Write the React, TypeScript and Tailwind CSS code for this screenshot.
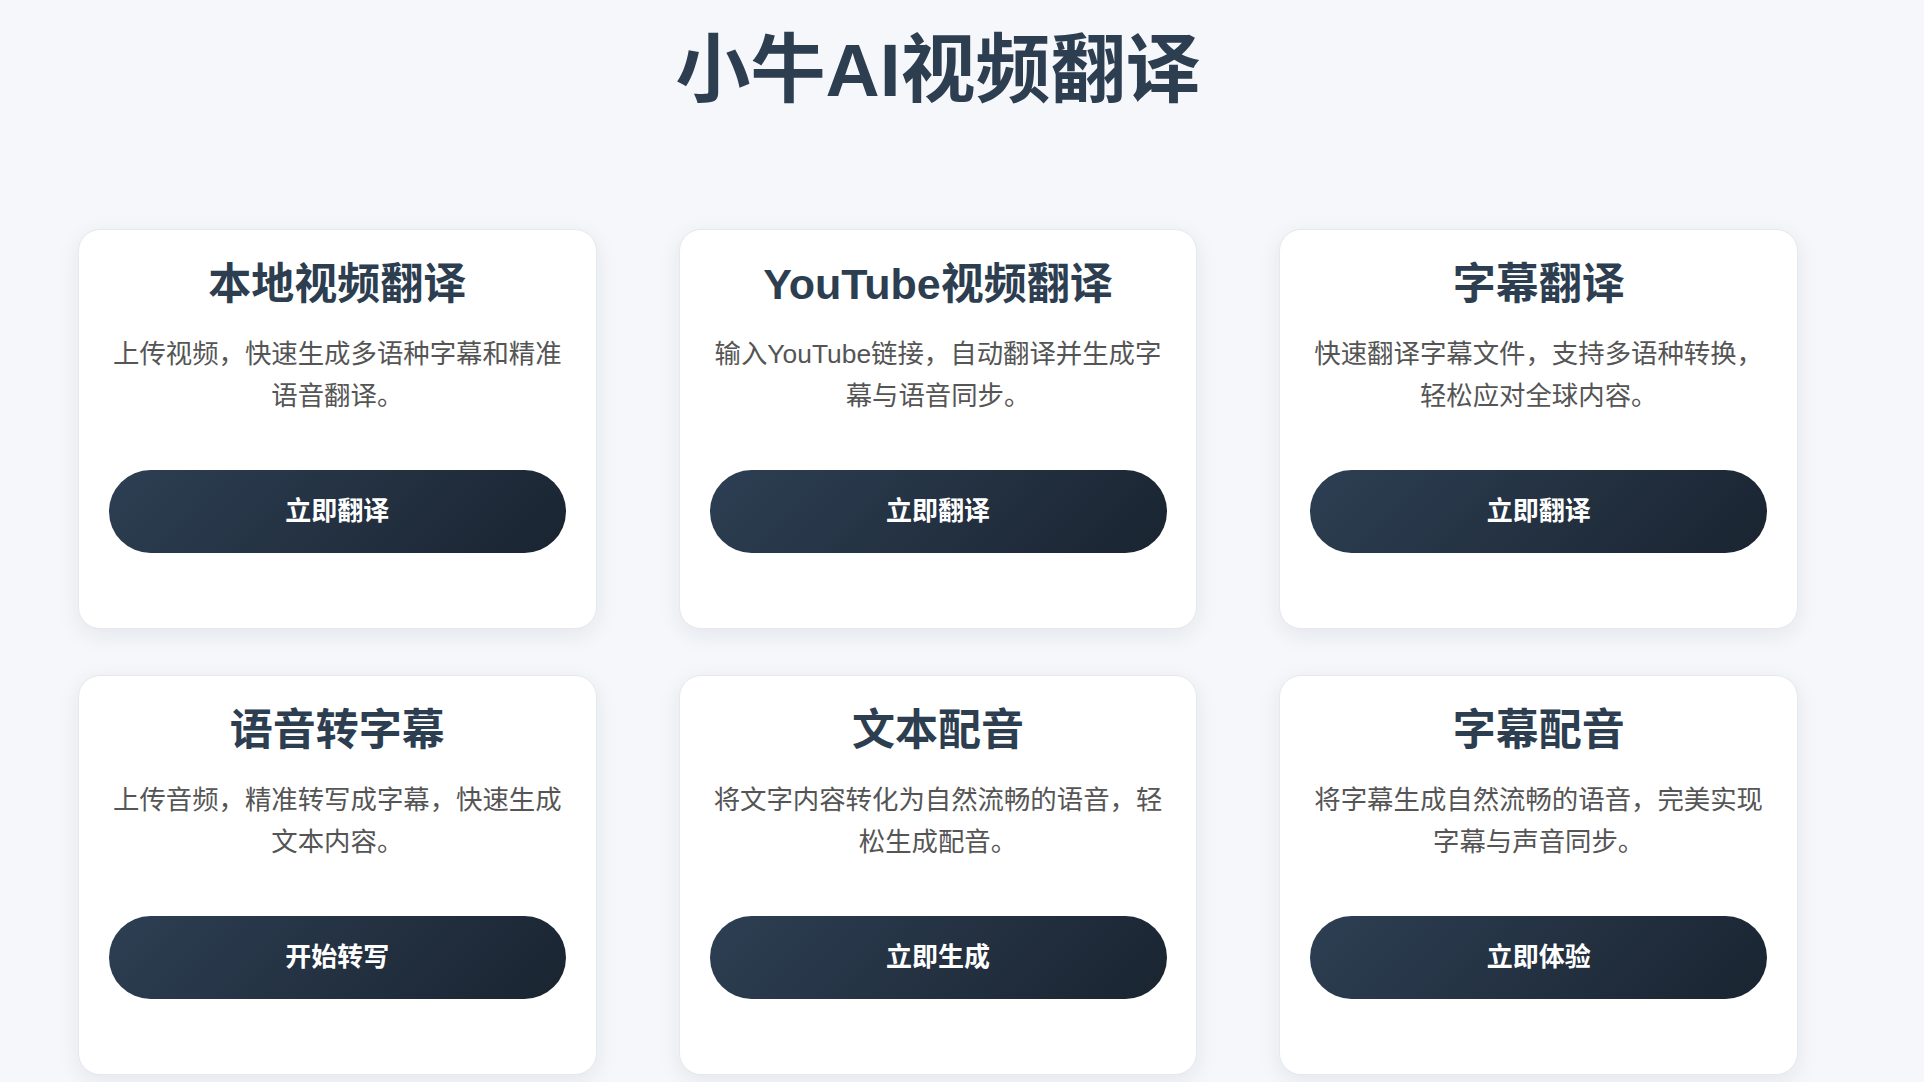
const cards = [
  {
    title: "本地视频翻译",
    desc: "上传视频，快速生成多语种字幕和精准语音翻译。",
    action: "立即翻译",
  },
  {
    title: "YouTube视频翻译",
    desc: "输入YouTube链接，自动翻译并生成字幕与语音同步。",
    action: "立即翻译",
  },
  {
    title: "字幕翻译",
    desc: "快速翻译字幕文件，支持多语种转换，轻松应对全球内容。",
    action: "立即翻译",
  },
  {
    title: "语音转字幕",
    desc: "上传音频，精准转写成字幕，快速生成文本内容。",
    action: "开始转写",
  },
  {
    title: "文本配音",
    desc: "将文字内容转化为自然流畅的语音，轻松生成配音。",
    action: "立即生成",
  },
  {
    title: "字幕配音",
    desc: "将字幕生成自然流畅的语音，完美实现字幕与声音同步。",
    action: "立即体验",
  },
];

export default function App() {
  return (
    <div
      className="min-h-screen w-full overflow-hidden bg-[#f5f7fa]"
      style={{ fontFamily: '"Liberation Sans", "Noto Sans CJK SC", sans-serif' }}
    >
      <div className="ml-[78px] w-[1720px]">
        {/* Header */}
        <h1 className="mt-[27px] text-center text-[75px] font-bold leading-[86px] text-[#2c3e50]">
          小牛AI视频翻译
        </h1>

        {/* Feature cards */}
        <div className="mt-[116px] grid grid-cols-3 gap-x-[82px] gap-y-[46px]">
          {cards.map((card) => (
            <div
              key={card.title}
              className="flex h-[400px] flex-col items-center rounded-[22px] border border-[#e6e8ec] bg-white px-[30px] pt-[29px] shadow-[0_6px_22px_rgba(30,40,60,0.08)]"
            >
              <h2 className="text-center text-[43px] font-bold leading-[50px] text-[#2c3e50]">
                {card.title}
              </h2>
              <p className="mt-6 h-[84px] text-center text-[26.4px] leading-[42px] text-[#555]">
                {card.desc}
              </p>
              <button className="mt-[53px] h-[83px] w-[457px] shrink-0 rounded-full bg-[linear-gradient(135deg,#2d3f53,#1a2431)] text-[26px] font-bold text-white">
                {card.action}
              </button>
            </div>
          ))}
        </div>
      </div>
    </div>
  );
}
